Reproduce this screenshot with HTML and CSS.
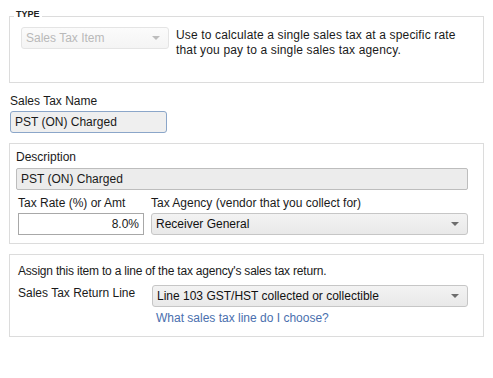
FILE: index.html
```html
<!DOCTYPE html>
<html>
<head>
<meta charset="utf-8">
<link rel="stylesheet" href="styles.css">
</head>
<body>
<div class="page">
  <fieldset class="box type-box">
    <legend class="legend">TYPE</legend>
    <div class="type-row">
      <div class="select disabled"><span>Sales Tax Item</span><i class="arrow"></i></div>
      <p class="type-desc">Use to calculate a single sales tax at a specific rate<br>that you pay to a single sales tax agency.</p>
    </div>
  </fieldset>

  <div class="name-block">
    <div class="label">Sales Tax Name</div>
    <div class="input name-input">PST (ON) Charged</div>
  </div>

  <div class="box desc-box">
    <div class="label">Description</div>
    <div class="input desc-input">PST (ON) Charged</div>
    <div class="rate-row">
      <div class="col rate-col">
        <div class="label">Tax Rate (%) or Amt</div>
        <div class="input rate-input">8.0%</div>
      </div>
      <div class="col agency-col">
        <div class="label">Tax Agency (vendor that you collect for)</div>
        <div class="select"><span>Receiver General</span><i class="arrow"></i></div>
      </div>
    </div>
  </div>

  <div class="box line-box">
    <div class="label assign">Assign this item to a line of the tax agency's sales tax return.</div>
    <div class="line-row">
      <div class="label line-label">Sales Tax Return Line</div>
      <div class="line-col">
        <div class="select"><span>Line 103 GST/HST collected or collectible</span><i class="arrow"></i></div>
        <a class="link" href="#">What sales tax line do I choose?</a>
      </div>
    </div>
  </div>
</div>
</body>
</html>
```

FILE: styles.css
```css
* { box-sizing: border-box; }
html, body { margin: 0; padding: 0; background: #fff; }
body {
  font-family: Arial, "Liberation Sans", sans-serif;
  font-size: 12px;
  color: #1a1a1a;
  width: 493px;
  height: 378px;
  overflow: hidden;
}
.page { padding: 0 9px; }

.box {
  border: 1px solid #dcdcdc;
  margin: 0;
}

.type-box {
  position: relative;
  margin-top: 16px;
  height: 67px;
  padding: 10px 0 0 11px;
}
.legend {
  position: absolute;
  left: 4px;
  top: -9px;
  background: #fff;
  padding: 0 2px;
  font-size: 9px;
  font-weight: bold;
  line-height: 12px;
  color: #222;
  margin: 0;
}
.type-row { display: flex; align-items: flex-start; }
.type-desc {
  margin: 1px 0 0 7px;
  line-height: 15px;
  letter-spacing: 0.15px;
  color: #1a1a1a;
}

.select {
  display: flex;
  align-items: center;
  justify-content: space-between;
  height: 22px;
  border: 1px solid #c6c6c6;
  border-radius: 3px;
  background: linear-gradient(#f3f3f3, #e9e9e9);
  padding: 0 8px 0 4px;
  color: #111;
}
.select.disabled {
  width: 148px;
  flex: none;
  color: #b9b9b9;
  border-color: #e4e4e4;
  background: linear-gradient(#fbfbfb, #f4f4f4);
}
.arrow {
  width: 0; height: 0;
  border-left: 4px solid transparent;
  border-right: 4px solid transparent;
  border-top: 4px solid #6d6d6d;
}
.select.disabled .arrow { border-top-color: #bdbdbd; }

.label { line-height: 14px; }

.name-block { padding: 11px 0 0 1px; }
.name-input {
  margin-top: 3px;
  width: 157px;
  height: 22px;
  border: 1px solid #8ba6c9;
  border-radius: 3px;
  background: #efefef;
  padding: 2px 4px;
  line-height: 16px;
}

.desc-box {
  margin-top: 10px;
  height: 101px;
  padding: 6px 15px 0 6px;
}
.desc-input {
  margin-top: 4px;
  height: 22px;
  border: 1px solid #bdbdbd;
  border-radius: 2px;
  background: #ececec;
  padding: 2px 4px;
  line-height: 16px;
}
.rate-row { display: flex; gap: 7px; margin-top: 6px; }
.rate-col { width: 128px; flex: none; }
.rate-col .label { padding-left: 2px; }
.agency-col { flex: 1; }
.col .label { margin-bottom: 3px; }
.rate-input {
  height: 22px;
  margin-left: 2px;
  border: 1px solid #a8a8a8;
  background: #fff;
  text-align: right;
  padding: 2px 4px;
  line-height: 16px;
}

.line-box {
  margin-top: 10px;
  height: 83px;
  padding: 9px 15px 0 8px;
}
.assign { letter-spacing: -0.2px; }
.line-row { display: flex; margin-top: 7px; }
.line-label { width: 134px; flex: none; padding-top: 1px; }
.line-col { flex: 1; }
.link {
  display: block;
  color: #4a6fae;
  text-decoration: none;
  margin: 4px 0 0 4px;
  line-height: 14px;
}
```
